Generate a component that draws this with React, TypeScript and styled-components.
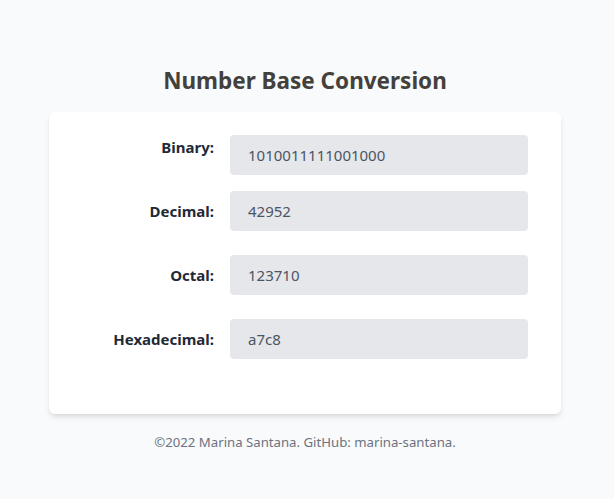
import React from "react";
import styled, { createGlobalStyle } from "styled-components";

const GlobalStyle = createGlobalStyle`
  html, body {
    margin: 0;
    padding: 0;
    background-color: #f9fafb;
    font-family: "Noto Sans", "Open Sans", sans-serif;
  }
`;

interface fieldProps {
  label: string;
  value: string;
  top?: boolean;
}

const fields: fieldProps[] = [
  { label: "Binary:", value: "1010011111001000", top: true },
  { label: "Decimal:", value: "42952" },
  { label: "Octal:", value: "123710" },
  { label: "Hexadecimal:", value: "a7c8" },
];

const Field: React.FC<fieldProps> = ({ label, value, top }) => {
  return (
    <Row $top={top}>
      <Label $top={top}>{label}</Label>
      <Input readOnly value={value} />
    </Row>
  );
};

const App: React.FC = () => {
  return (
    <Page>
      <GlobalStyle />
      <Title>Number Base Conversion</Title>
      <Card>
        {fields.map((f) => (
          <Field key={f.label} {...f} />
        ))}
      </Card>
      <Footer>©2022 Marina Santana. GitHub: marina-santana.</Footer>
    </Page>
  );
};

export default App;

const Page = styled.div`
  display: flex;
  flex-direction: column;
  align-items: center;
  min-height: 499px;
  padding: 64px 4px 0 0;
  box-sizing: border-box;
`;

const Title = styled.h1`
  margin: 0 0 14px;
  font-size: 22.5px;
  line-height: 34px;
  font-weight: 700;
  color: #44403c;
`;

const Card = styled.div`
  box-sizing: border-box;
  width: 512px;
  height: 302px;
  padding: 23px 33px 0 0;
  background-color: #ffffff;
  border-radius: 6px;
  box-shadow: 0 4px 6px -1px rgba(0, 0, 0, 0.1), 0 2px 4px -2px rgba(0, 0, 0, 0.1);
  display: flex;
  flex-direction: column;
  gap: 24px;
`;

const Row = styled.div<{ $top?: boolean }>`
  display: grid;
  grid-template-columns: 165px 1fr;
  column-gap: 16px;
  align-items: ${(p) => (p.$top ? "start" : "center")};
  margin-bottom: ${(p) => (p.$top ? "-8px" : "0")};
`;

const Label = styled.label<{ $top?: boolean }>`
  text-align: right;
  font-size: 15px;
  font-weight: 700;
  color: #1f2937;
  padding-top: ${(p) => (p.$top ? "2px" : "0")};
`;

const Input = styled.input`
  box-sizing: border-box;
  width: 100%;
  height: 40px;
  padding: 0 18px;
  border: none;
  outline: none;
  border-radius: 4px;
  background-color: #e5e7eb;
  font-family: "Noto Sans", "Open Sans", sans-serif;
  font-size: 15px;
  color: #4b5563;
`;

const Footer = styled.p`
  margin: 18px 0 0;
  font-size: 13.2px;
  line-height: 20px;
  color: #6b7280;
`;
